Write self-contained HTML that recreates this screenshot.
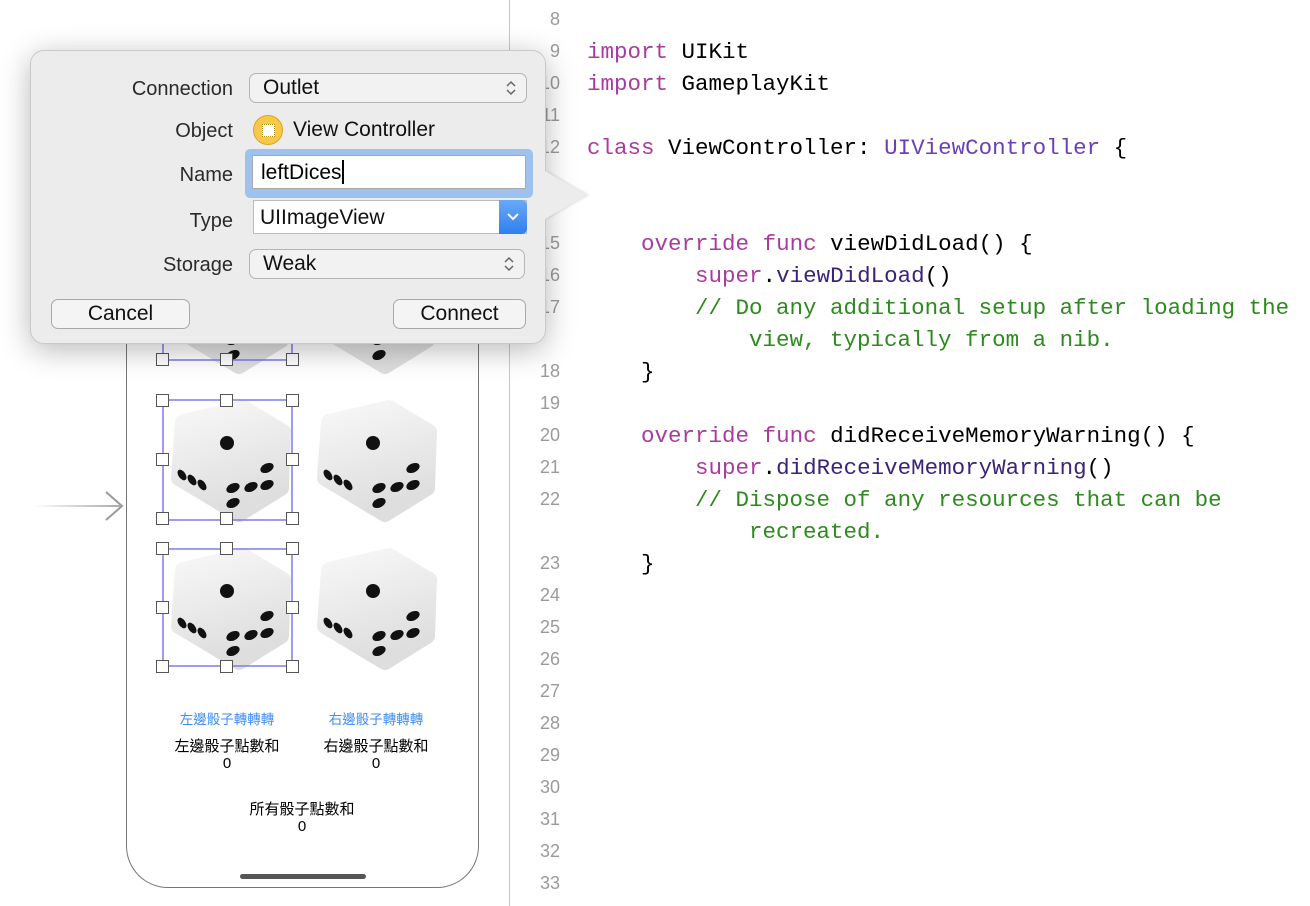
<!DOCTYPE html>
<html><head><meta charset="utf-8">
<style>
*{margin:0;padding:0;box-sizing:border-box}
body{width:1310px;height:906px;background:#fff;position:relative;overflow:hidden;font-family:"Liberation Sans","Noto Sans CJK TC",sans-serif}
.ln{position:absolute;left:520px;width:40px;text-align:right;font:18px "Liberation Sans",sans-serif;color:#9a9a9a}
.code{position:absolute;left:587px;font:22.5px/32px "Liberation Mono",monospace;color:#000;white-space:pre}
.k{color:#a93b9f}.t{color:#6b3fb5}.f{color:#3b237a}.c{color:#2d8a1e}
.pop{position:absolute;left:30px;top:50px;width:516px;height:294px;background:#ececec;border:1px solid #c9c9c9;border-radius:14px;box-shadow:0 6px 30px rgba(0,0,0,.28)}
.lab{position:absolute;right:312px;font-size:20px;color:#2a2a2a;text-align:right}
.sel{position:absolute;left:218px;width:278px;height:30px;border:1px solid #b5b5b5;border-radius:7px;background:#f2f2f2;font-size:21px;padding-left:13px;line-height:28px;color:#111}
.ud{position:absolute;right:10px;top:6px;width:10px;height:16px}
.btn{position:absolute;top:248px;height:30px;border:1px solid #a9a9a9;border-radius:7px;background:#f4f4f4;font-size:21px;line-height:28px;text-align:center;color:#111}
.h{position:absolute;width:13px;height:13px;border:1.5px solid #555;background:#fff}
.cj{position:absolute;font-family:"Liberation Sans","Noto Sans CJK TC",sans-serif;text-align:center;font-size:15px;line-height:17px}
</style></head><body>
<div style="position:absolute;left:509px;top:0;width:1px;height:906px;background:#c8c8c8"></div>

<div style="position:absolute;left:126px;top:300px;width:353px;height:588px;border:1px solid #777;border-top:none;border-radius:0 0 42px 42px"></div>
<div style="position:absolute;left:240px;top:874px;width:126px;height:5px;border-radius:3px;background:#555"></div>
<div style="position:absolute;left:32px;top:505px;width:88px;height:2px;background:linear-gradient(90deg,#fff,#aaa)"></div>
<svg style="position:absolute;left:100px;top:490px" width="26" height="32"><path d="M6 2 L22 16 L6 30" fill="none" stroke="#999" stroke-width="2"/></svg>

<svg style="position:absolute;left:0;top:0" width="510" height="906">
<defs>
<linearGradient id="g" x1="0" y1="0" x2="0.3" y2="1"><stop offset="0" stop-color="#f7f7f7"/><stop offset="1" stop-color="#dedede"/></linearGradient>
<g id="die">
<polygon points="18,22 78,8 118,32 116,88 74,114 14,78" fill="url(#g)" stroke="url(#g)" stroke-width="16" stroke-linejoin="round"/>
<circle cx="62" cy="43" r="7" fill="#111"/>
<g fill="#111">
<ellipse cx="17" cy="75" rx="3.5" ry="6" transform="rotate(-35 17 75)"/>
<ellipse cx="27" cy="80" rx="3.5" ry="6" transform="rotate(-35 27 80)"/>
<ellipse cx="37" cy="85" rx="3.5" ry="6" transform="rotate(-35 37 85)"/>
<ellipse cx="68" cy="88" rx="7" ry="4.5" transform="rotate(-25 68 88)"/>
<ellipse cx="86" cy="87" rx="7" ry="4.5" transform="rotate(-25 86 87)"/>
<ellipse cx="102" cy="85" rx="7" ry="4.5" transform="rotate(-25 102 85)"/>
<ellipse cx="102" cy="68" rx="7" ry="4.5" transform="rotate(-25 102 68)"/>
<ellipse cx="68" cy="103" rx="7" ry="4.5" transform="rotate(-25 68 103)"/>
</g>
</g>
</defs>
<use href="#die" x="165" y="252"/><use href="#die" x="311" y="252"/>
<use href="#die" x="165" y="400"/><use href="#die" x="311" y="400"/>
<use href="#die" x="165" y="548"/><use href="#die" x="311" y="548"/>
<g fill="none" stroke="#7b7bf0" stroke-width="1.5">
<rect x="163" y="250" width="129" height="110"/>
<rect x="163" y="400" width="129" height="120"/>
<rect x="163" y="549" width="129" height="117"/>
</g>
</svg>
<div class="h" style="left:156px;top:353px"></div><div class="h" style="left:220px;top:353px"></div><div class="h" style="left:286px;top:353px"></div>
<div class="h" style="left:156px;top:394px"></div><div class="h" style="left:220px;top:394px"></div><div class="h" style="left:286px;top:394px"></div>
<div class="h" style="left:156px;top:453px"></div><div class="h" style="left:286px;top:453px"></div>
<div class="h" style="left:156px;top:512px"></div><div class="h" style="left:220px;top:512px"></div><div class="h" style="left:286px;top:512px"></div>
<div class="h" style="left:156px;top:542px"></div><div class="h" style="left:220px;top:542px"></div><div class="h" style="left:286px;top:542px"></div>
<div class="h" style="left:156px;top:601px"></div><div class="h" style="left:286px;top:601px"></div>
<div class="h" style="left:156px;top:660px"></div><div class="h" style="left:220px;top:660px"></div><div class="h" style="left:286px;top:660px"></div>

<div class="cj" style="left:162px;top:711px;width:130px;color:#3d8ef5;font-size:13.5px">左邊骰子轉轉轉</div>
<div class="cj" style="left:311px;top:711px;width:130px;color:#3d8ef5;font-size:13.5px">右邊骰子轉轉轉</div>
<div class="cj" style="left:162px;top:738px;width:130px">左邊骰子點數和<br>0</div>
<div class="cj" style="left:311px;top:738px;width:130px">右邊骰子點數和<br>0</div>
<div class="cj" style="left:227px;top:801px;width:150px">所有骰子點數和<br>0</div>

<div class="ln" style="top:9px">8</div><div class="ln" style="top:41px">9</div><div class="ln" style="top:73px">10</div><div class="ln" style="top:105px">11</div><div class="ln" style="top:137px">12</div><div class="ln" style="top:233px">15</div><div class="ln" style="top:265px">16</div><div class="ln" style="top:297px">17</div>
<div class="ln" style="top:361px">18</div><div class="ln" style="top:393px">19</div><div class="ln" style="top:425px">20</div><div class="ln" style="top:457px">21</div><div class="ln" style="top:489px">22</div>
<div class="ln" style="top:553px">23</div><div class="ln" style="top:585px">24</div><div class="ln" style="top:617px">25</div><div class="ln" style="top:649px">26</div><div class="ln" style="top:681px">27</div><div class="ln" style="top:713px">28</div><div class="ln" style="top:745px">29</div><div class="ln" style="top:777px">30</div><div class="ln" style="top:809px">31</div><div class="ln" style="top:841px">32</div><div class="ln" style="top:873px">33</div>

<div class="code" style="top:36px"><span class="k">import</span> UIKit
<span class="k">import</span> GameplayKit

<span class="k">class</span> ViewController: <span class="t">UIViewController</span> {


    <span class="k">override</span> <span class="k">func</span> viewDidLoad() {
        <span class="k">super</span>.<span class="f">viewDidLoad</span>()
        <span class="c">// Do any additional setup after loading the</span>
<span class="c">            view, typically from a nib.</span>
    }

    <span class="k">override</span> <span class="k">func</span> didReceiveMemoryWarning() {
        <span class="k">super</span>.<span class="f">didReceiveMemoryWarning</span>()
        <span class="c">// Dispose of any resources that can be</span>
<span class="c">            recreated.</span>
    }</div>

<div class="pop">
  <div style="position:absolute;right:-42px;top:120px;width:0;height:0;border-top:24px solid transparent;border-bottom:24px solid transparent;border-left:42px solid #ececec;filter:drop-shadow(2px 0 1px rgba(0,0,0,.12))"></div>
  <div class="lab" style="top:27px">Connection</div>
  <div class="sel" style="top:22px">Outlet<svg class="ud" viewBox="0 0 10 16"><path d="M1 6 L5 2 L9 6 M1 10 L5 14 L9 10" fill="none" stroke="#666" stroke-width="1.5"/></svg></div>
  <div class="lab" style="top:69px">Object</div>
  <div style="position:absolute;left:222px;top:64px;width:30px;height:30px;border-radius:50%;background:#f7c948;border:1px solid #d9a620"><div style="position:absolute;left:8px;top:8px;width:13px;height:13px;background:#fff;border:1px dotted #b88a10"></div></div>
  <div style="position:absolute;left:262px;top:67px;font-size:21px;color:#111">View Controller</div>
  <div class="lab" style="top:113px">Name</div>
  <div style="position:absolute;left:214px;top:98px;width:288px;height:49px;background:#9ec2ee;border-radius:5px"></div>
  <div style="position:absolute;left:221px;top:104px;width:274px;height:34px;background:#fff;border:1px solid #aaa;font-size:21px;line-height:34px;padding-left:8px;color:#000">leftDices<span style="display:inline-block;width:2px;height:24px;background:#000;vertical-align:-5px"></span></div>
  <div class="lab" style="top:159px">Type</div>
  <div style="position:absolute;left:222px;top:149px;width:274px;height:34px;background:#fff;border:1px solid #bbb;font-size:21px;line-height:34px;padding-left:6px;color:#111">UIImageView
    <div style="position:absolute;right:-1px;top:-1px;width:28px;height:34px;background:linear-gradient(#6aa9f7,#2f7ff0);border-radius:0 5px 5px 0"><svg width="28" height="34"><path d="M9 14 L14 19 L19 14" fill="none" stroke="#fff" stroke-width="2"/></svg></div>
  </div>
  <div class="lab" style="top:203px">Storage</div>
  <div class="sel" style="top:198px;width:276px">Weak<svg class="ud" viewBox="0 0 10 16"><path d="M1 6 L5 2 L9 6 M1 10 L5 14 L9 10" fill="none" stroke="#666" stroke-width="1.5"/></svg></div>
  <div class="btn" style="left:20px;width:139px">Cancel</div>
  <div class="btn" style="left:362px;width:133px">Connect</div>
</div>
</body></html>
